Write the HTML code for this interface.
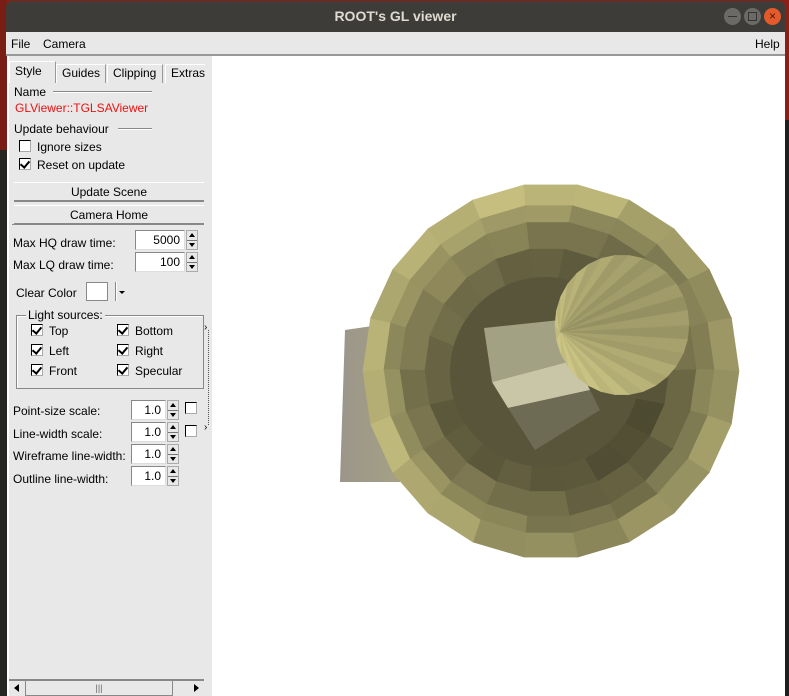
<!DOCTYPE html>
<html><head><meta charset="utf-8"><style>
*{margin:0;padding:0;box-sizing:border-box}
body{width:789px;height:696px;overflow:hidden;background:#8a1f15;font-family:"Liberation Sans",sans-serif;font-size:12px;color:#000;position:relative}
.a{position:absolute}
.cb{position:absolute;width:12px;height:12px;border:1px solid #000;background:#fff;border-right-color:#aaa;border-bottom-color:#aaa}
.cb.c::after{content:"";position:absolute;left:2px;top:0px;width:4px;height:7px;border:solid #000;border-width:0 2px 2px 0;transform:rotate(40deg)}
.btn{position:absolute;left:14px;width:190px;height:20px;border-top:1px solid #fff;border-bottom:2px solid #888;text-align:center;line-height:18px}
.num{position:absolute;background:#fff;border:1px solid #888;border-right-color:#ddd;border-bottom-color:#ddd;text-align:right;padding-right:4px;line-height:18px;height:20px}
.spin{position:absolute;width:12px;height:20px;border:1px solid #aaa;background:#e8e8e8}
.spin::before{content:"";position:absolute;left:2px;top:2px;border:3px solid transparent;border-bottom:4px solid #000;border-top:0}
.spin::after{content:"";position:absolute;left:2px;bottom:2px;border:3px solid transparent;border-top:4px solid #000;border-bottom:0}
.spin i{position:absolute;left:0;right:0;top:9px;border-top:1px solid #777}
</style></head><body>
<div class="a" style="left:0;top:0;width:7px;height:696px;background:#262624"></div>
<div class="a" style="left:0;top:0;width:7px;height:150px;background:#7a1d15"></div>
<div class="a" style="left:785px;top:0;width:4px;height:696px;background:#1e1e1e"></div>
<div class="a" style="left:785px;top:0;width:4px;height:120px;background:#8a1f15"></div>
<div class="a" style="left:6px;top:1px;width:779px;height:31px;background:#3d3c38;border-radius:6px 6px 0 0;color:#dfdbd2;font-weight:bold;font-size:14px;text-align:center;line-height:30px">ROOT's GL viewer</div>
<div class="a" style="left:724px;top:8px;width:17px;height:17px;border-radius:50%;background:#6b6a66"><div class="a" style="left:4px;top:8px;width:9px;height:1px;background:#333"></div></div>
<div class="a" style="left:744px;top:8px;width:17px;height:17px;border-radius:50%;background:#6b6a66"><div class="a" style="left:4px;top:4px;width:9px;height:9px;border:1px solid #333"></div></div>
<div class="a" style="left:764px;top:8px;width:17px;height:17px;border-radius:50%;background:#e45a2b;color:#4a1a08;font-size:12px;text-align:center;line-height:17px">×</div>
<div class="a" style="left:6px;top:32px;width:779px;height:24px;background:#e8e8e8;border-bottom:2px solid #999"></div>
<div class="a" style="left:11px;top:37px">File</div>
<div class="a" style="left:43px;top:37px">Camera</div>
<div class="a" style="left:755px;top:37px">Help</div>
<div class="a" style="left:212px;top:56px;width:573px;height:640px;background:#fff"></div>
<div class="a" style="left:7px;top:56px;width:205px;height:640px;background:#e8e8e8;border-left:2px solid #fff"></div>
<div class="a" style="left:9px;top:61px;width:47px;height:22px;border:1px solid #fff;border-bottom:none;border-right-color:#999;background:#e8e8e8"></div>
<div class="a" style="left:15px;top:64px">Style</div>
<div class="a" style="left:56px;top:64px;width:50px;height:19px;border-left:1px solid #fff;border-right:1px solid #999;border-top:1px solid #fff"></div>
<div class="a" style="left:62px;top:66px">Guides</div>
<div class="a" style="left:107px;top:64px;width:56px;height:19px;border-left:1px solid #fff;border-right:1px solid #999;border-top:1px solid #fff"></div>
<div class="a" style="left:113px;top:66px">Clipping</div>
<div class="a" style="left:165px;top:64px;width:40px;height:19px;border-left:1px solid #fff;border-top:1px solid #fff"></div>
<div class="a" style="left:171px;top:66px">Extras</div>
<div class="a" style="left:14px;top:85px">Name</div>
<div class="a" style="left:53px;top:91px;width:99px;border-top:1px solid #888;border-bottom:1px solid #fff"></div>
<div class="a" style="left:15px;top:101px;color:#f01010">GLViewer::TGLSAViewer</div>
<div class="a" style="left:14px;top:122px">Update behaviour</div>
<div class="a" style="left:118px;top:128px;width:34px;border-top:1px solid #888;border-bottom:1px solid #fff"></div>
<div class="cb" style="left:19px;top:140px"></div><div class="a" style="left:37px;top:140px">Ignore sizes</div>
<div class="cb c" style="left:19px;top:158px"></div><div class="a" style="left:37px;top:158px">Reset on update</div>
<div class="btn" style="top:182px">Update Scene</div>
<div class="btn" style="top:205px">Camera Home</div>
<div class="a" style="left:12px;top:224px;width:192px;border-top:1px solid #888"></div>
<div class="a" style="left:13px;top:236px">Max HQ draw time:</div>
<div class="num" style="left:135px;top:230px;width:50px">5000</div><div class="spin" style="left:186px;top:230px"><i></i></div>
<div class="a" style="left:13px;top:258px">Max LQ draw time:</div>
<div class="num" style="left:135px;top:252px;width:50px">100</div><div class="spin" style="left:186px;top:252px"><i></i></div>
<div class="a" style="left:16px;top:286px">Clear Color</div>
<div class="a" style="left:86px;top:282px;width:22px;height:19px;background:#fff;border:1px solid #888"></div>
<div class="a" style="left:115px;top:282px;height:19px;border-left:1px solid #888;border-right:1px solid #fff"></div>
<div class="a" style="left:119px;top:291px;border:3px solid transparent;border-top:3px solid #000"></div>
<div class="a" style="left:16px;top:315px;width:188px;height:74px;border:1px solid #888;box-shadow:1px 1px 0 #fff inset"></div>
<div class="a" style="left:26px;top:308px;background:#e8e8e8;padding:0 2px">Light sources:</div>
<div class="cb c" style="left:31px;top:324px"></div><div class="a" style="left:49px;top:324px">Top</div>
<div class="cb c" style="left:117px;top:324px"></div><div class="a" style="left:135px;top:324px">Bottom</div>
<div class="cb c" style="left:31px;top:344px"></div><div class="a" style="left:49px;top:344px">Left</div>
<div class="cb c" style="left:117px;top:344px"></div><div class="a" style="left:135px;top:344px">Right</div>
<div class="cb c" style="left:31px;top:364px"></div><div class="a" style="left:49px;top:364px">Front</div>
<div class="cb c" style="left:117px;top:364px"></div><div class="a" style="left:135px;top:364px">Specular</div>
<div class="a" style="left:204px;top:322px;font-size:10px">›</div>
<div class="a" style="left:208px;top:330px;height:95px;border-left:1px dotted #555"></div>
<div class="a" style="left:204px;top:422px;font-size:10px">›</div>
<div class="a" style="left:13px;top:404px">Point-size scale:</div>
<div class="num" style="left:131px;top:400px;width:35px">1.0</div><div class="spin" style="left:167px;top:400px"><i></i></div>
<div class="cb" style="left:185px;top:402px"></div>
<div class="a" style="left:13px;top:427px">Line-width scale:</div>
<div class="num" style="left:131px;top:422px;width:35px">1.0</div><div class="spin" style="left:167px;top:422px"><i></i></div>
<div class="cb" style="left:185px;top:425px"></div>
<div class="a" style="left:13px;top:449px">Wireframe line-width:</div>
<div class="num" style="left:131px;top:444px;width:35px">1.0</div><div class="spin" style="left:167px;top:444px"><i></i></div>
<div class="a" style="left:13px;top:472px">Outline line-width:</div>
<div class="num" style="left:131px;top:466px;width:35px">1.0</div><div class="spin" style="left:167px;top:466px"><i></i></div>
<div class="a" style="left:9px;top:679px;width:195px;height:17px;border-top:2px solid #888"></div>
<div class="a" style="left:14px;top:684px;border:4px solid transparent;border-right:5px solid #000;border-left:0"></div>
<div class="a" style="left:25px;top:680px;width:148px;height:16px;border:1px solid #888;background:#e8e8e8;text-align:center;font-size:9px;line-height:14px;color:#666">|||</div>
<div class="a" style="left:194px;top:684px;border:4px solid transparent;border-left:5px solid #000;border-right:0"></div>
<svg id="gl" class="a" style="left:212px;top:56px" width="573" height="640" viewBox="212 56 573 640">
<defs>
<linearGradient id="g1" x1="0" x2="1"><stop offset="0" stop-color="#9b968a"/><stop offset="1" stop-color="#a5a085"/></linearGradient>
<radialGradient id="o" cx="0.45" cy="0.45" r="0.6"><stop offset="0.6" stop-color="#857f55"/><stop offset="1" stop-color="#a6a068"/></radialGradient>
<radialGradient id="m" cx="0.5" cy="0.5" r="0.5"><stop offset="0.5" stop-color="#5c583c"/><stop offset="1" stop-color="#76714c"/></radialGradient>
</defs>
<polygon points="345,330 400,322 400,482 340,482" fill="url(#g1)"/>
<g id="rings">
<circle cx="551" cy="371" r="188" fill="url(#o)"/>
<circle cx="548" cy="368" r="150" fill="#7b7650"/>
<circle cx="548" cy="372" r="122" fill="url(#m)"/>
</g>
<polygon points="484,328 560,320 575,360 492,382" fill="#a3a183"/>
<polygon points="492,382 575,360 590,390 508,408" fill="#c8c6a6"/>
<polygon points="508,408 590,390 600,410 535,450" fill="#6e6b55"/>
<g id="cone">
<ellipse cx="622" cy="325" rx="67" ry="70" fill="#aaa470"/>
</g>
</svg>
<script>
(function(){
var NS="http://www.w3.org/2000/svg";
var g=document.getElementById("rings");
var R=[[551,371,188],[549,369,165],[548,369,148],[547,370,122],[545,372,95]];
var base=[[168,162,108],[140,135,90],[118,113,76],[96,92,62]];
var N=22;
while(g.firstChild)g.removeChild(g.firstChild);
function col(c,f){return "rgb("+c.map(function(v){return Math.max(0,Math.min(255,Math.round(v*f)))}).join(",")+")";}
for(var k=0;k<4;k++){
 for(var i=0;i<N;i++){
  var a0=i/N*2*Math.PI, a1=(i+1)/N*2*Math.PI, am=(a0+a1)/2;
  var o=R[k],n=R[k+1];
  var pts=[[o[0]+o[2]*Math.cos(a0),o[1]+o[2]*Math.sin(a0)],[o[0]+o[2]*Math.cos(a1),o[1]+o[2]*Math.sin(a1)],
   [n[0]+n[2]*Math.cos(a1),n[1]+n[2]*Math.sin(a1)],[n[0]+n[2]*Math.cos(a0),n[1]+n[2]*Math.sin(a0)]];
  var f=1+0.12*Math.cos(am+2.4)+0.06*Math.sin(am*3+k)+((i+k)%2?0.03:-0.03);
  var p=document.createElementNS(NS,"polygon");
  p.setAttribute("points",pts.map(function(q){return q[0].toFixed(1)+","+q[1].toFixed(1)}).join(" "));
  p.setAttribute("fill",col(base[k],f));
  p.setAttribute("stroke",col(base[k],f));p.setAttribute("stroke-width","0.6");
  g.appendChild(p);
 }
}
var c=document.createElementNS(NS,"circle");c.setAttribute("cx",545);c.setAttribute("cy",372);c.setAttribute("r",95);c.setAttribute("fill","#58553b");g.appendChild(c);
var cone=document.getElementById("cone");
while(cone.firstChild)cone.removeChild(cone.firstChild);
var M=30,cx=622,cy=325,ax=560,ay=332;
for(var j=0;j<M;j++){
 var b0=j/M*2*Math.PI,b1=(j+1)/M*2*Math.PI,bm=(b0+b1)/2;
 var f2=0.92+0.12*Math.cos(bm-2.6)+(j%2?0.04:-0.02);
 var pp=document.createElementNS(NS,"polygon");
 pp.setAttribute("points",[ax,ay,cx+67*Math.cos(b0),cy+70*Math.sin(b0),cx+67*Math.cos(b1),cy+70*Math.sin(b1)].map(function(v){return v.toFixed(1)}).join(","));
 var cc=col([190,184,124],f2);pp.setAttribute("fill",cc);pp.setAttribute("stroke",cc);pp.setAttribute("stroke-width","0.6");
 cone.appendChild(pp);
}
})();
</script>
</body></html>
